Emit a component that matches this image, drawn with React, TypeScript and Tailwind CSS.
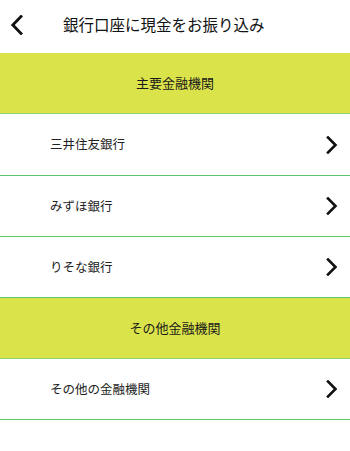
const font = { fontFamily: '"Noto Sans CJK JP", "Noto Sans", sans-serif' }

function ChevronRight() {
  return (
    <svg width="12" height="18" viewBox="0 0 12 18" fill="none" className="shrink-0">
      <path d="M2 1.5 L9.5 9 L2 16.5" stroke="#111" strokeWidth="2.6" strokeLinecap="square" />
    </svg>
  )
}

function SectionHeader({ title }: { title: string }) {
  return (
    <div className="h-[61px] flex items-center justify-center bg-[#dbe34a] border-b border-[#8fd16a] text-[13px] text-[#1a1a1a]">
      {title}
    </div>
  )
}

function BankRow({ name, tall }: { name: string; tall?: boolean }) {
  return (
    <div
      className={`${tall ? 'h-[62px]' : 'h-[61px]'} flex items-center justify-between pl-[50px] pr-[12px] bg-white border-b border-[#5cc46e] text-[12.5px] text-[#222]`}
    >
      <span>{name}</span>
      <ChevronRight />
    </div>
  )
}

export default function App() {
  return (
    <div className="w-[350px] h-[451px] bg-white" style={font}>
      <div className="h-[53px] flex items-center bg-white pb-[3px]">
        <div className="w-[63px] flex items-center pl-[10px]">
          <svg width="14" height="20" viewBox="0 0 14 20" fill="none">
            <path d="M11 1.5 L2.8 10 L11 18.5" stroke="#111" strokeWidth="2.8" strokeLinecap="square" />
          </svg>
        </div>
        <h1 className="text-[15.5px] text-[#111]">銀行口座に現金をお振り込み</h1>
      </div>

      <SectionHeader title="主要金融機関" />
      <BankRow name="三井住友銀行" tall />
      <BankRow name="みずほ銀行" />
      <BankRow name="りそな銀行" />

      <SectionHeader title="その他金融機関" />
      <BankRow name="その他の金融機関" />
    </div>
  )
}
